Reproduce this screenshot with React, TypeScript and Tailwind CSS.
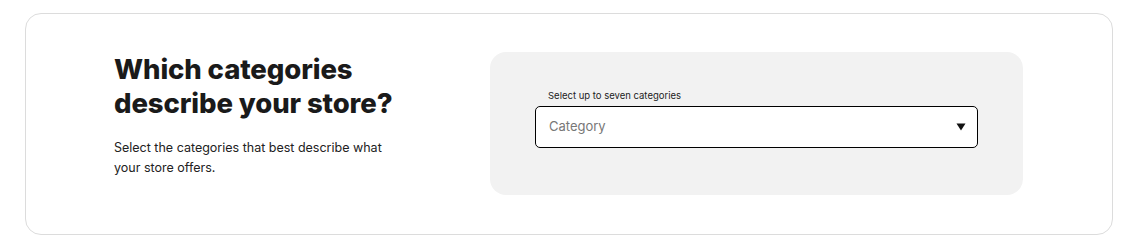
export default function App() {
  return (
    <div className="w-[1142px] h-[248px] bg-white pt-[13px] pl-[25px] font-['Inter',sans-serif]">
      <div className="w-[1088px] h-[222px] rounded-[16px] border border-[#dcdcdc] flex items-start">
        <div className="w-[464px] pl-[88px] pt-[38px] shrink-0">
          <h1 className="text-[27.5px] leading-[34px] font-extrabold tracking-[-0.1px] text-[#1a1a1a]">
            Which categories
            <br />
            describe your store?
          </h1>
          <p className="mt-[18px] text-[12.5px] leading-[20px] text-[#222] w-[290px]">
            Select the categories that best describe what your store offers.
          </p>
        </div>
        <div className="mt-[38px] w-[533px] h-[143px] rounded-[16px] bg-[#f2f2f2] flex flex-col justify-center px-[45px] pb-[10px]">
          <label className="block text-[9.5px] leading-[12px] text-[#222] pl-[13px] mb-[4px]">
            Select up to seven categories
          </label>
          <div className="h-[42px] bg-white border border-black rounded-[5px] flex items-center justify-between pl-[13px] pr-[11px]">
            <span className="text-[13px] text-[#777]">Category</span>
            <svg width="10" height="8" viewBox="0 0 10 8">
              <path d="M0.5 0.5 L9.5 0.5 L5 7.5 Z" fill="#111" />
            </svg>
          </div>
        </div>
      </div>
    </div>
  );
}
